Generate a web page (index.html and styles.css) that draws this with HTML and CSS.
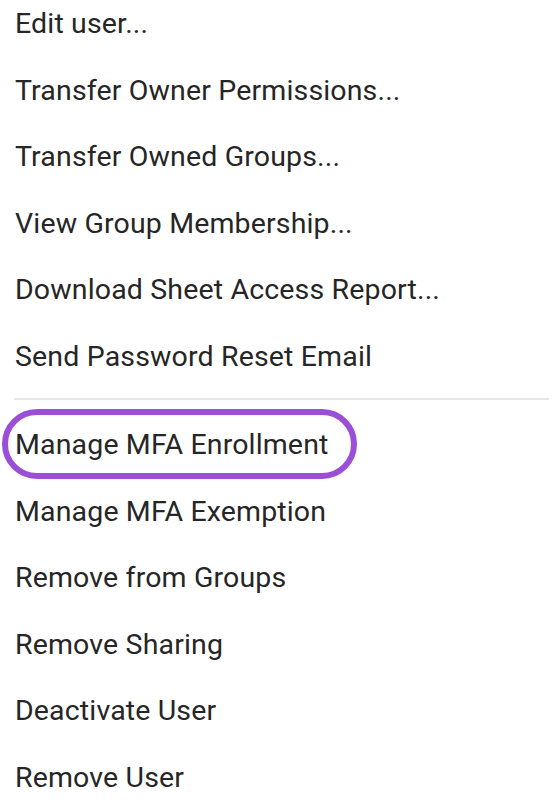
FILE: index.html
```html
<!DOCTYPE html>
<html lang="en">
<head>
    <meta charset="UTF-8">
    <meta name="viewport" content="width=device-width, initial-scale=1.0">
    <title>User Actions</title>
    <link rel="stylesheet" href="styles.css">
</head>
<body>

<ul class="menu">
    <li class="menu-item">Edit user...</li>
    <li class="menu-item">Transfer Owner Permissions...</li>
    <li class="menu-item">Transfer Owned Groups...</li>
    <li class="menu-item">View Group Membership...</li>
    <li class="menu-item">Download Sheet Access Report...</li>
    <li class="menu-item">Send Password Reset Email</li>
    <li class="divider"></li>
    <li class="menu-item highlighted">Manage MFA Enrollment</li>
    <li class="menu-item">Manage MFA Exemption</li>
    <li class="menu-item">Remove from Groups</li>
    <li class="menu-item">Remove Sharing</li>
    <li class="menu-item">Deactivate User</li>
    <li class="menu-item">Remove User</li>
</ul>

</body>
</html>
```

FILE: styles.css
```css
body {
    font-family: Roboto, "Noto Sans", sans-serif;
    background-color: #ffffff;
    margin: 0;
    padding: 0;
    color: #262626;
    overflow: hidden;
}

.menu {
    list-style: none;
    margin: 0;
    padding: 0;
}

.menu-item {
    position: relative;
    height: 66.5px;
    line-height: 47px;
    padding-left: 15px;
    font-size: 28.5px;
    letter-spacing: 0.15px;
}

.divider {
    height: 2px;
    margin: -1px 9px 21px 14px;
    background-color: #e6e6e6;
}

.highlighted::after {
    content: "";
    position: absolute;
    left: 2px;
    top: -12px;
    width: 355px;
    height: 70px;
    box-sizing: border-box;
    border: 6px solid #9b4fd6;
    border-radius: 35px;
}
```
